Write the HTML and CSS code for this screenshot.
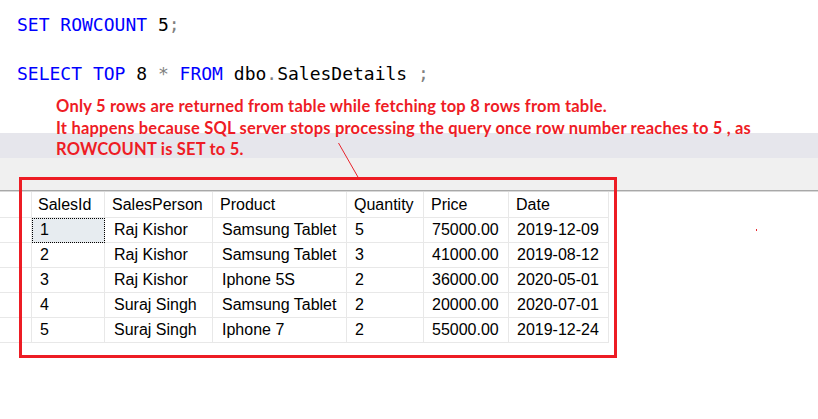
FILE: index.html
```html
<!DOCTYPE html>
<html>
<head>
<meta charset="utf-8">
<link rel="stylesheet" href="styles.css">
</head>
<body>
<div class="editor">
  <div class="code-line"><span class="kw">SET</span> <span class="kw">ROWCOUNT</span> 5<span class="op">;</span></div>
  <div class="code-line">&nbsp;</div>
  <div class="code-line"><span class="kw">SELECT</span> <span class="kw">TOP</span> 8 <span class="op">*</span> <span class="kw">FROM</span> dbo<span class="op">.</span>SalesDetails <span class="op">;</span></div>
</div>
<div class="tabstrip"></div>
<div class="toolbar"></div>
<div class="grid">
  <div class="row head">
    <div class="cell c0"></div>
    <div class="cell c1">SalesId</div>
    <div class="cell c2">SalesPerson</div>
    <div class="cell c3">Product</div>
    <div class="cell c4">Quantity</div>
    <div class="cell c5">Price</div>
    <div class="cell c6">Date</div>
  </div>
  <div class="row">
    <div class="cell c0"></div>
    <div class="cell c1 focus">1</div>
    <div class="cell c2">Raj Kishor</div>
    <div class="cell c3">Samsung Tablet</div>
    <div class="cell c4">5</div>
    <div class="cell c5">75000.00</div>
    <div class="cell c6">2019-12-09</div>
  </div>
  <div class="row">
    <div class="cell c0"></div>
    <div class="cell c1">2</div>
    <div class="cell c2">Raj Kishor</div>
    <div class="cell c3">Samsung Tablet</div>
    <div class="cell c4">3</div>
    <div class="cell c5">41000.00</div>
    <div class="cell c6">2019-08-12</div>
  </div>
  <div class="row">
    <div class="cell c0"></div>
    <div class="cell c1">3</div>
    <div class="cell c2">Raj Kishor</div>
    <div class="cell c3">Iphone 5S</div>
    <div class="cell c4">2</div>
    <div class="cell c5">36000.00</div>
    <div class="cell c6">2020-05-01</div>
  </div>
  <div class="row">
    <div class="cell c0"></div>
    <div class="cell c1">4</div>
    <div class="cell c2">Suraj Singh</div>
    <div class="cell c3">Samsung Tablet</div>
    <div class="cell c4">2</div>
    <div class="cell c5">20000.00</div>
    <div class="cell c6">2020-07-01</div>
  </div>
  <div class="row">
    <div class="cell c0"></div>
    <div class="cell c1">5</div>
    <div class="cell c2">Suraj Singh</div>
    <div class="cell c3">Iphone 7</div>
    <div class="cell c4">2</div>
    <div class="cell c5">55000.00</div>
    <div class="cell c6">2019-12-24</div>
  </div>
</div>

<div class="note">
  <div>Only 5 rows are returned from table while fetching top 8 rows from table.</div>
  <div>It happens because SQL server stops processing the query once row number reaches to 5 , as</div>
  <div>ROWCOUNT is SET to 5.</div>
</div>
<svg class="pointer" width="30" height="40" viewBox="0 0 30 40"><line x1="4.5" y1="1" x2="24.5" y2="36" stroke="#e8242c" stroke-width="1"/></svg>
<div class="highlight"></div>
<div class="speck"></div>
</body>
</html>
```
FILE: styles.css
```css
html, body {
  margin: 0;
  padding: 0;
  background: #ffffff;
  width: 818px;
  height: 419px;
  overflow: hidden;
  position: relative;
}

.editor {
  height: 133px;
  box-sizing: border-box;
  padding: 12.5px 0 0 17px;
  font-family: "DejaVu Sans Mono", "Liberation Mono", monospace;
  font-size: 18px;
  line-height: 24.5px;
  color: #000000;
}

.code-line {
  white-space: pre;
  height: 24.5px;
}

.kw { color: #0000ff; }
.op { color: #808080; }

.tabstrip {
  height: 25px;
  background: #e6e6ec;
}

.toolbar {
  height: 32px;
  background: #f0f0f0;
  border-bottom: 1px solid #a8a8a8;
  box-shadow: 0 1px 0 #d8d8d8;
  margin-bottom: 1px;
}

.grid {
  display: flex;
  flex-direction: column;
  font-family: "Liberation Sans", Arial, sans-serif;
  font-size: 16px;
  color: #000000;
}

.row {
  display: flex;
  height: 25px;
}

.row.head {
  height: 26px;
}

.cell {
  box-sizing: border-box;
  height: 100%;
  border-right: 1px solid #e8e8e8;
  border-bottom: 1px solid #e8e8e8;
  padding-left: 8px;
  display: flex;
  align-items: center;
  white-space: nowrap;
}

.head .cell { padding-left: 6px; }

.c0 { width: 32px; padding-left: 0; }
.c1 { width: 73px; }
.c2 { width: 108px; }
.c3 { width: 134px; }
.c4 { width: 77px; }
.c5 { width: 85px; }
.c6 { width: 100px; }

.head .c2, .head .c3, .head .c4, .head .c5, .head .c6 { padding-left: 7px; }
.row:not(.head) .c2, .row:not(.head) .c3 { padding-left: 9px; }

.focus {
  background: #e7ecf0;
  outline: 1px dotted #000000;
  outline-offset: -1px;
}

.note {
  position: absolute;
  left: 56px;
  top: 96px;
  font-family: Lato, "Open Sans", sans-serif;
  font-weight: 700;
  font-size: 16.5px;
  letter-spacing: 0.2px;
  line-height: 21.5px;
  color: #ee1c25;
  white-space: nowrap;
}

.pointer {
  position: absolute;
  left: 334px;
  top: 142px;
}

.highlight {
  position: absolute;
  left: 19px;
  top: 177px;
  width: 598px;
  height: 181px;
  box-sizing: border-box;
  border: 3px solid #ed1c24;
}

.speck {
  position: absolute;
  left: 756px;
  top: 229px;
  width: 1px;
  height: 2px;
  background: #e8242c;
}
```
